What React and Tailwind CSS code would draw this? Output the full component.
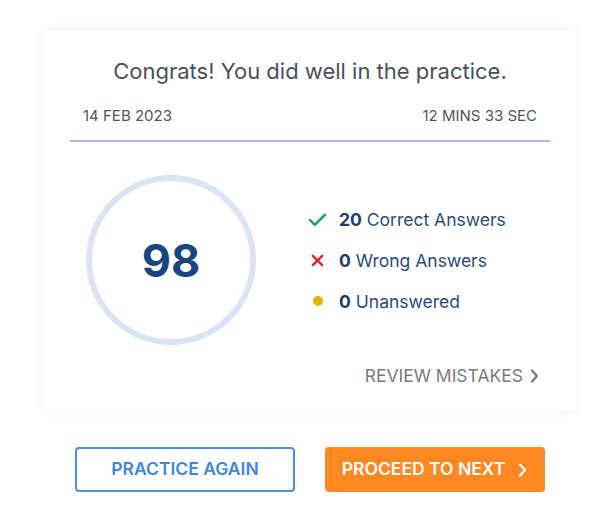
import React from 'react';

function Chevron({ className }) {
  return (
    <svg viewBox="0 0 10 16" className={className} fill="none" stroke="currentColor" strokeWidth="2.4" strokeLinecap="round" strokeLinejoin="round">
      <path d="M2.5 2.5 L7.5 8 L2.5 13.5" />
    </svg>
  );
}

const stats = [
  { key: 'correct', count: 20, label: 'Correct Answers' },
  { key: 'wrong', count: 0, label: 'Wrong Answers' },
  { key: 'skip', count: 0, label: 'Unanswered' },
];

function StatIcon({ type }) {
  if (type === 'correct') {
    return (
      <svg viewBox="0 0 18 14" className="w-[19px] h-[15px] text-[#1aa86a]" fill="none" stroke="currentColor" strokeWidth="2.4" strokeLinecap="round" strokeLinejoin="round">
        <path d="M2 7.5 L6.5 12 L16 2.5" />
      </svg>
    );
  }
  if (type === 'wrong') {
    return (
      <svg viewBox="0 0 14 14" className="w-[13px] h-[13px] text-[#e0262b]" fill="none" stroke="currentColor" strokeWidth="2.6" strokeLinecap="round">
        <path d="M2 2 L12 12 M12 2 L2 12" />
      </svg>
    );
  }
  return <span className="block w-[10px] h-[10px] rounded-full bg-[#e8b20c]" />;
}

export default function App() {
  return (
    <div className="min-h-screen bg-white pt-[31px] font-['Inter','Liberation_Sans',sans-serif]">
      {/* Result card */}
      <div className="ml-[44px] w-[532px] bg-white rounded-[4px] shadow-[0_0_14px_rgba(60,70,160,0.07)] px-[26px] pt-[25px] pb-[22px]">
        <h1 className="text-center text-[22px] leading-[30px] text-[#4a505c]">
          Congrats! You did well in the practice.
        </h1>
        <div className="mt-[20px] flex justify-between px-[13px] text-[15px] leading-[20px] text-[#4f5562]">
          <span>14 FEB 2023</span>
          <span>12 MINS 33 SEC</span>
        </div>
        <div className="mt-[14px] h-[2px] bg-[#b1b5e9]" />

        <div className="mt-[33px] flex items-center">
          <div className="ml-[16px] w-[170px] h-[170px] rounded-full border-[6px] border-[#dbe4f4] flex items-center justify-center">
            <span className="text-[45px] font-bold text-[#1a4585] leading-none">98</span>
          </div>
          <ul className="ml-[52px] flex flex-col gap-[16px]">
            {stats.map((s) => (
              <li key={s.key} className="flex items-center text-[17.5px] leading-[25px] text-[#2c4a7e]">
                <span className="w-[19px] flex items-center justify-center mr-[12px]">
                  <StatIcon type={s.key} />
                </span>
                <span className="font-bold text-[#1d3b6f] mr-[5px]">{s.count}</span>
                {s.label}
              </li>
            ))}
          </ul>
        </div>

        <div className="mt-[19px] flex justify-end pr-[10px]">
          <button className="flex items-center gap-[6px] text-[17.5px] leading-[24px] text-[#7b7b7b]">
            REVIEW MISTAKES
            <Chevron className="w-[11px] h-[16px]" />
          </button>
        </div>
      </div>

      {/* Actions */}
      <div className="ml-[44px] w-[532px] mt-[37px] flex justify-center gap-[30px]">
        <button className="w-[220px] h-[45px] rounded-[4px] border-2 border-[#4a8ee6] text-[#3f86e0] text-[17.5px] font-semibold">
          PRACTICE AGAIN
        </button>
        <button className="w-[220px] h-[45px] rounded-[4px] bg-[#ff8822] text-white text-[17.5px] font-semibold flex items-center justify-center gap-[12px]">
          PROCEED TO NEXT
          <Chevron className="w-[11px] h-[16px]" />
        </button>
      </div>
    </div>
  );
}
